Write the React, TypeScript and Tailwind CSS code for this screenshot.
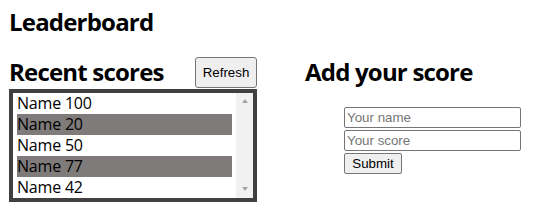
import React from 'react'

const scores = [
  { name: 'Name', score: 100 },
  { name: 'Name', score: 20 },
  { name: 'Name', score: 50 },
  { name: 'Name', score: 77 },
  { name: 'Name', score: 42 },
]

function ScoreList() {
  return (
    <div className="mt-[1px] flex h-[113px] w-[248px] border-4 border-[#404040] bg-white">
      <ul className="flex-1 overflow-hidden px-[4px] text-[16px] leading-[21px] tracking-[-0.2px] text-black">
        {scores.map((s, i) => (
          <li key={i} className={i % 2 === 1 ? 'bg-[#7f7b7a]' : ''}>
            {s.name} {s.score}
          </li>
        ))}
      </ul>
      {/* fake scrollbar, the native one differs per platform */}
      <div className="flex w-[17px] flex-col items-center justify-between bg-[#f1f1f1] pt-[6px] pb-[7px]">
        <div className="h-0 w-0 border-x-[3.5px] border-b-[4px] border-x-transparent border-b-[#a3a3a3]" />
        <div className="h-0 w-0 border-x-[3.5px] border-t-[4px] border-x-transparent border-t-[#a3a3a3]" />
      </div>
    </div>
  )
}

export default function App() {
  return (
    <div className="min-h-[214px] bg-white pl-[9px] pt-[6px] font-['Open_Sans',sans-serif] text-black">
      <h2 className="text-[24px] font-bold leading-[32px] tracking-[-0.8px]">Leaderboard</h2>

      <div className="mt-[18px] flex gap-[48px]">
        <div className="w-[248px]">
          <div className="flex items-end justify-between">
            <h2 className="text-[24px] font-bold leading-[32px] tracking-[-0.8px]">Recent scores</h2>
            <button className="h-[31px] w-[62px] rounded-[3px] border border-[#767676] bg-[#efefef] font-['Liberation_Sans',Arial,sans-serif] text-[13.33px] text-black">
              Refresh
            </button>
          </div>
          <ScoreList />
        </div>

        <div>
          <h2 className="text-[24px] font-bold leading-[32px] tracking-[-0.8px]">Add your score</h2>
          <form className="mt-[19px] ml-[39px] flex flex-col items-start gap-[2px] font-['Liberation_Sans',Arial,sans-serif] text-[13.33px]">
            <input
              placeholder="Your name"
              className="h-[21px] w-[177px] rounded-[2px] border border-[#767676] px-[2px] placeholder:text-[#757575]"
            />
            <input
              placeholder="Your score"
              className="h-[21px] w-[177px] rounded-[2px] border border-[#767676] px-[2px] placeholder:text-[#757575]"
            />
            <button
              type="button"
              className="h-[21px] w-[58px] rounded-[2px] border border-[#767676] bg-[#efefef] text-black"
            >
              Submit
            </button>
          </form>
        </div>
      </div>
    </div>
  )
}
